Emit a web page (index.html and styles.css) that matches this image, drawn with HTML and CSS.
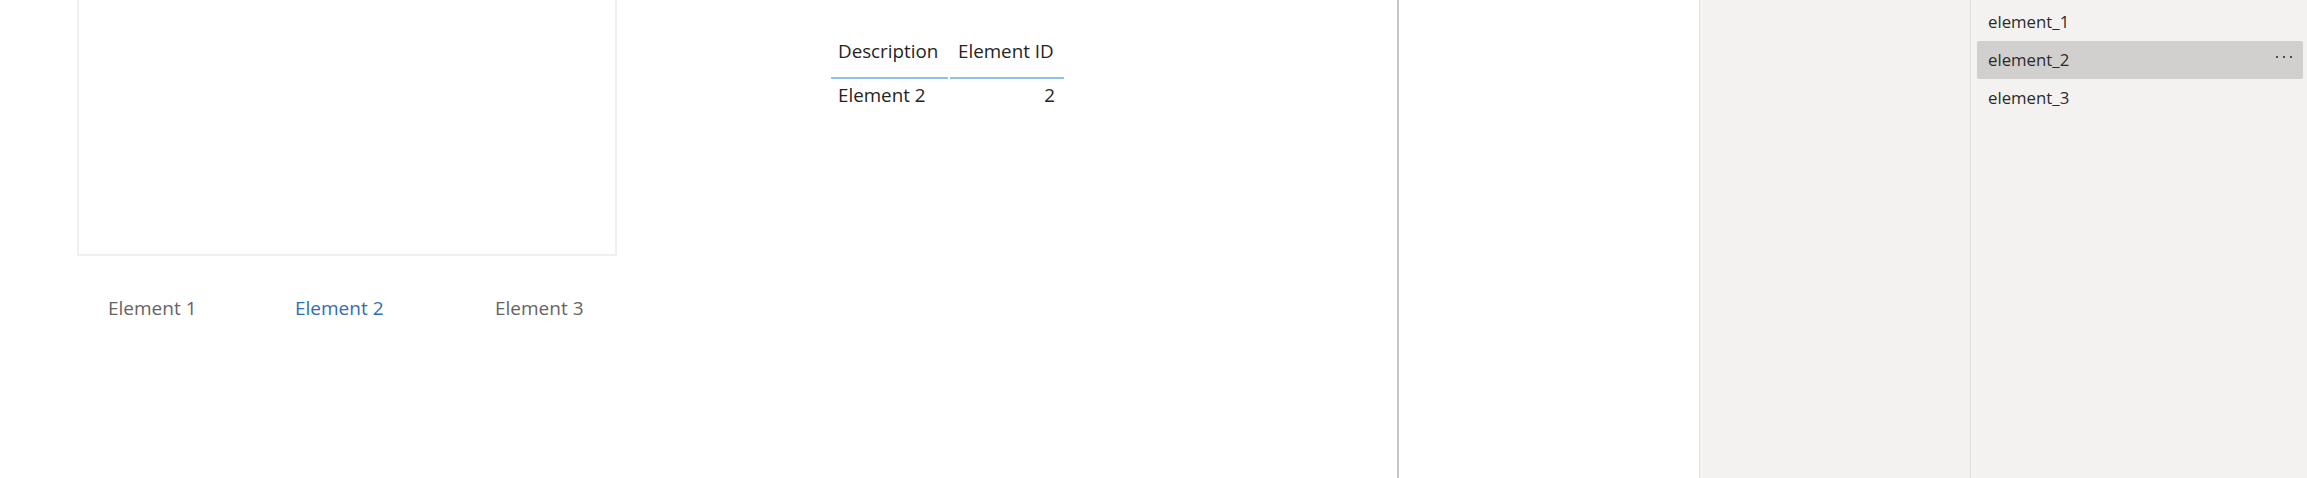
FILE: index.html
```html
<!DOCTYPE html>
<html lang="en">
<head>
<meta charset="utf-8">
<title>Report</title>
<link rel="stylesheet" href="styles.css">
</head>
<body>
<main class="canvas">
  <section class="slicer">
    <div class="slicer-box"></div>
    <div class="slicer-items">
      <span class="slicer-item">Element 1</span>
      <span class="slicer-item selected">Element 2</span>
      <span class="slicer-item">Element 3</span>
    </div>
  </section>
  <section class="table">
    <div class="th">Description</div>
    <div class="th">Element ID</div>
    <div class="td">Element 2</div>
    <div class="td num">2</div>
  </section>
</main>
<aside class="pane-blank"></aside>
<aside class="pane-gray"></aside>
<aside class="pane-list">
  <div class="list-row">element_1</div>
  <div class="list-row active">element_2<span class="more"><i></i><i></i><i></i></span></div>
  <div class="list-row">element_3</div>
</aside>
</body>
</html>
```
FILE: styles.css
```css
html, body {
  margin: 0;
  padding: 0;
}
body {
  display: flex;
  width: 2307px;
  height: 478px;
  overflow: hidden;
  background: #ffffff;
  font-family: "Open Sans", "Noto Sans", sans-serif;
  color: #252423;
}
.canvas {
  width: 1397px;
  flex: none;
  display: flex;
  align-items: flex-start;
  background: #ffffff;
}
.slicer {
  margin-left: 77px;
  width: 540px;
  flex: none;
}
.slicer-box {
  height: 254px;
  border: 2px solid #efefef;
  border-top: none;
  box-sizing: content-box;
  width: 536px;
}
.slicer-items {
  display: grid;
  grid-template-columns: 187px 200px auto;
  padding-left: 31px;
  margin-top: 40px;
}
.slicer-item {
  font-size: 19px;
  line-height: 24px;
  color: #666462;
  white-space: nowrap;
}
.slicer-item.selected {
  color: #2f6db5;
}
.table {
  margin-left: 214px;
  margin-top: 35px;
  display: grid;
  grid-template-columns: 117px 114px;
  column-gap: 2px;
  font-size: 18.8px;
  line-height: 24px;
  flex: none;
}
.th {
  padding: 4px 8px 14px 7px;
  border-bottom: 2px solid #8ec3f1;
  white-space: nowrap;
  color: #252423;
}
.th + .th {
  padding-left: 8px;
}
.td {
  padding: 4px 8px 4px 7px;
  white-space: nowrap;
  color: #252423;
}
.td.num {
  text-align: right;
  padding-right: 9px;
}
.pane-blank {
  width: 300px;
  flex: none;
  border-left: 2px solid #c8c6c4;
  background: #ffffff;
}
.pane-gray {
  width: 270px;
  flex: none;
  border-left: 1px solid #e1dfdd;
  border-right: 1px solid #e1dfdd;
  background: #f3f2f1;
}
.pane-list {
  flex: 1;
  background: #f3f2f1;
  padding: 3px 4px 0 6px;
}
.list-row {
  height: 38px;
  line-height: 38px;
  padding-left: 11px;
  padding-right: 11px;
  font-size: 16.8px;
  color: #2b2a29;
  display: flex;
  justify-content: space-between;
  border-radius: 2px;
}
.list-row.active {
  background: #d2d0ce;
}
.more {
  display: flex;
  gap: 5px;
  align-self: flex-start;
  margin-top: 15px;
}
.more i {
  width: 2px;
  height: 2px;
  background: #4a4f57;
  display: block;
}
```
